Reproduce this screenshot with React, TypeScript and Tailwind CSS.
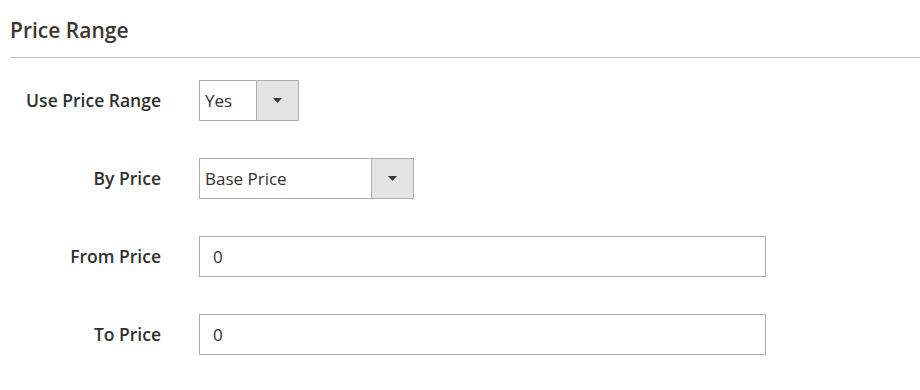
import React from "react";

function Arrow() {
  return (
    <svg width="9" height="5" viewBox="0 0 9 5" className="block">
      <polygon points="0,0 9,0 4.5,5" fill="#41362f" />
    </svg>
  );
}

function Select({ value, width }: { value: string; width: string }) {
  return (
    <div className={`flex h-[41px] border border-[#adadad] bg-white ${width}`}>
      <div className="flex flex-1 items-center pl-[5px] text-[17px] text-[#303030]">{value}</div>
      <div className="flex w-[42px] items-center justify-center border-l border-[#adadad] bg-[#e3e3e3]">
        <Arrow />
      </div>
    </div>
  );
}

function Input({ value }: { value: string }) {
  return (
    <div className="flex h-[41px] w-[567px] items-center border border-[#adadad] bg-white pl-[13px] text-[17px] text-[#303030]">
      {value}
    </div>
  );
}

function Row({ label, children }: { label: string; children: React.ReactNode }) {
  return (
    <div className="flex items-center">
      <div className="w-[151px] text-right text-[17.5px] font-semibold text-[#303030]">{label}</div>
      <div className="ml-[38px]">{children}</div>
    </div>
  );
}

export default function App() {
  return (
    <div
      className="h-[390px] w-[920px] bg-white pl-[10px]"
      style={{ fontFamily: '"Open Sans", sans-serif' }}
    >
      <div className="pt-[16px] text-[21px] font-semibold leading-[28px] text-[#41362f]">Price Range</div>
      <div className="mt-[13px] h-px bg-[#cac3b4]" />
      <div className="mt-[22px] flex flex-col gap-[37px]">
        <Row label="Use Price Range">
          <Select value="Yes" width="w-[100px]" />
        </Row>
        <Row label="By Price">
          <Select value="Base Price" width="w-[215px]" />
        </Row>
        <Row label="From Price">
          <Input value="0" />
        </Row>
        <Row label="To Price">
          <Input value="0" />
        </Row>
      </div>
    </div>
  );
}
